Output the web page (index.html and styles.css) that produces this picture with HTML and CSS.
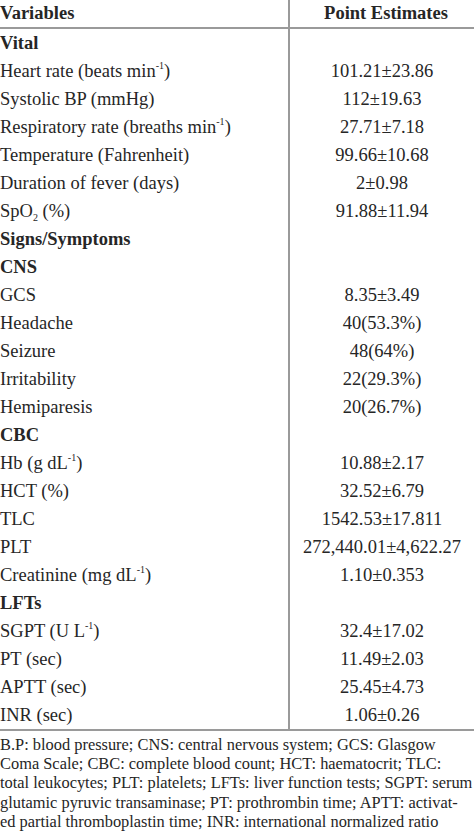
FILE: index.html
```html
<!DOCTYPE html>
<html>
<head>
<meta charset="utf-8">
<link rel="stylesheet" href="styles.css">
</head>
<body>
<div class="page">
  <table class="tbl">
    <thead>
      <tr><th class="var">Variables</th><th class="val">Point Estimates</th></tr>
    </thead>
    <tbody>
      <tr class="sec"><td class="var">Vital</td><td class="val"></td></tr>
      <tr><td class="var">Heart rate (beats min<sup>-1</sup>)</td><td class="val">101.21±23.86</td></tr>
      <tr><td class="var">Systolic BP (mmHg)</td><td class="val">112±19.63</td></tr>
      <tr><td class="var">Respiratory rate (breaths min<sup>-1</sup>)</td><td class="val">27.71±7.18</td></tr>
      <tr><td class="var">Temperature (Fahrenheit)</td><td class="val">99.66±10.68</td></tr>
      <tr><td class="var">Duration of fever (days)</td><td class="val">2±0.98</td></tr>
      <tr><td class="var">SpO<sub>2</sub> (%)</td><td class="val">91.88±11.94</td></tr>
      <tr class="sec"><td class="var">Signs/Symptoms</td><td class="val"></td></tr>
      <tr class="sec"><td class="var">CNS</td><td class="val"></td></tr>
      <tr><td class="var">GCS</td><td class="val">8.35±3.49</td></tr>
      <tr><td class="var">Headache</td><td class="val">40(53.3%)</td></tr>
      <tr><td class="var">Seizure</td><td class="val">48(64%)</td></tr>
      <tr><td class="var">Irritability</td><td class="val">22(29.3%)</td></tr>
      <tr><td class="var">Hemiparesis</td><td class="val">20(26.7%)</td></tr>
      <tr class="sec"><td class="var">CBC</td><td class="val"></td></tr>
      <tr><td class="var">Hb (g dL<sup>-1</sup>)</td><td class="val">10.88±2.17</td></tr>
      <tr><td class="var">HCT (%)</td><td class="val">32.52±6.79</td></tr>
      <tr><td class="var">TLC</td><td class="val">1542.53±17.811</td></tr>
      <tr><td class="var">PLT</td><td class="val">272,440.01±4,622.27</td></tr>
      <tr><td class="var">Creatinine (mg dL<sup>-1</sup>)</td><td class="val">1.10±0.353</td></tr>
      <tr class="sec"><td class="var">LFTs</td><td class="val"></td></tr>
      <tr><td class="var">SGPT (U L<sup>-1</sup>)</td><td class="val">32.4±17.02</td></tr>
      <tr><td class="var">PT (sec)</td><td class="val">11.49±2.03</td></tr>
      <tr><td class="var">APTT (sec)</td><td class="val">25.45±4.73</td></tr>
      <tr><td class="var">INR (sec)</td><td class="val">1.06±0.26</td></tr>
    </tbody>
  </table>
  <p class="note">B.P: blood pressure; CNS: central nervous system; GCS: Glasgow<br>Coma Scale; CBC: complete blood count; HCT: haematocrit; TLC:<br>total leukocytes; PLT: platelets; LFTs: liver function tests; SGPT: serum<br>glutamic pyruvic transaminase; PT: prothrombin time; APTT: activat-<br>ed partial thromboplastin time; INR: international normalized ratio</p>
</div>
</body>
</html>
```

FILE: styles.css
```css
html, body {
  margin: 0;
  padding: 0;
  background: #ffffff;
}
.page {
  width: 474px;
  height: 835px;
  overflow: hidden;
  font-family: "Liberation Serif", "Times New Roman", Times, serif;
  color: #262626;
}
.tbl {
  width: 474px;
  border-collapse: collapse;
  table-layout: fixed;
  font-size: 18.5px;
}
.tbl th, .tbl td {
  padding: 0;
  height: 28px;
  line-height: 28px;
  white-space: nowrap;
  vertical-align: middle;
}
.tbl th {
  height: 27px;
  line-height: 27px;
  font-weight: bold;
  border-bottom: 2px solid #9a9a9a;
}
.tbl .var {
  width: 288px;
  text-align: left;
  border-right: 2px solid #9a9a9a;
}
.tbl th.val {
  padding-left: 8px;
}
.tbl .val {
  text-align: center;
}
.tbl tbody tr:last-child td {
  border-bottom: 2px solid #9a9a9a;
}
.sec .var {
  font-weight: bold;
}
sup {
  font-size: 10px;
  vertical-align: 8px;
  line-height: 0;
}
sub {
  font-size: 10px;
  vertical-align: -4px;
  line-height: 0;
}
.note {
  margin: 4px 0 0 0;
  font-size: 16.4px;
  line-height: 19.2px;
  white-space: nowrap;
}
```
